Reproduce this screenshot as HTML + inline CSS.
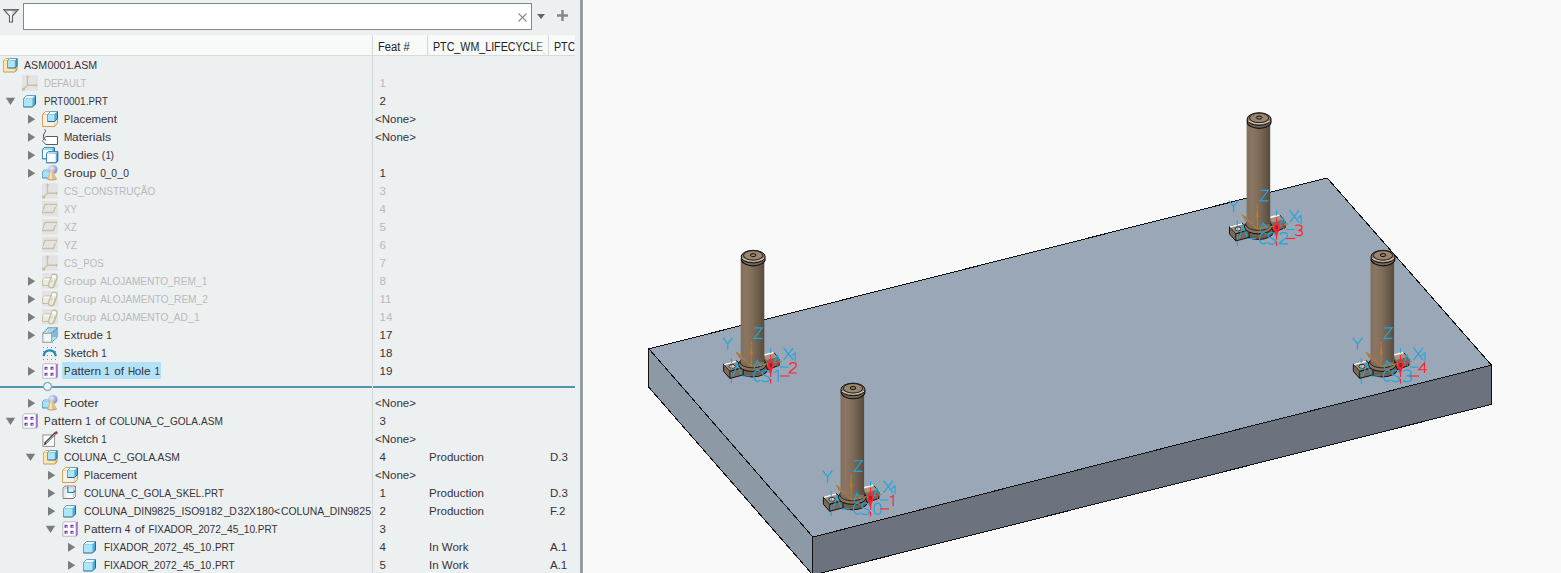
<!DOCTYPE html>
<html><head><meta charset="utf-8"><style>
html,body{margin:0;padding:0;width:1561px;height:573px;overflow:hidden;background:#f9f9f9;font-family:"Liberation Sans",sans-serif;}
#left{position:absolute;left:0;top:0;width:580px;height:573px;background:#ecf0f1;overflow:hidden}
#sep{position:absolute;left:580px;top:0;width:3px;height:573px;background:#949ca0}
#sepw{position:absolute;left:583px;top:0;width:1px;height:573px;background:#ffffff}
#vp{position:absolute;left:584px;top:0;width:977px;height:573px;background:#f9f9f9;overflow:hidden}
.search{position:absolute;left:23px;top:3px;width:507px;height:25px;background:#fff;border:1px solid #7f8a8e}
.hdr{position:absolute;left:0;top:35px;width:575px;height:20px;background:#f8f9f9;border-bottom:1px solid #d6dadc}
.vl{position:absolute;width:1px;background:#d3d7d9}
.ht{position:absolute;top:36.5px;height:20px;line-height:20px;transform-origin:0 0;font-size:12px;color:#222;white-space:pre;overflow:hidden}
.t{position:absolute;height:18px;line-height:18px;font-size:11.5px;color:#373236;white-space:pre;transform-origin:0 0}
.g{color:#b9b9bb}
.rn{display:inline-block;white-space:pre;vertical-align:top}
.ri{display:inline-block;white-space:pre;transform-origin:0 0}
.c1,.c2,.c3{transform:none}
.ic{position:absolute;overflow:visible}
.tr{position:absolute;width:0;height:0;border-top:4.6px solid transparent;border-bottom:4.6px solid transparent;border-left:7.4px solid #7c7c7c}
.td{position:absolute;width:0;height:0;border-left:4.7px solid transparent;border-right:4.7px solid transparent;border-top:7.4px solid #7c7c7c}
.hl{position:absolute;height:17px;background:#b3e1f7;margin-top:0px}
.ins{position:absolute;left:0;width:575px;height:2px;background:#5294b2}
.insc{position:absolute;left:42.5px;width:7px;height:7px;border:1.5px solid #5e9cb8;border-radius:50%;background:#eef1f3;box-shadow:0 0 1px #b9d5e2}
#clip{position:absolute;left:0;top:56px;width:371px;height:517px;overflow:hidden}
</style></head><body>
<div id="left">
<svg style="position:absolute;left:3px;top:9px" width="16" height="14" viewBox="0 0 16 14"><defs><linearGradient id="fg" x1="0" x2="1"><stop offset="0" stop-color="#c8c8c8"/><stop offset="0.45" stop-color="#ffffff"/><stop offset="1" stop-color="#8a8a8a"/></linearGradient></defs><path d="M0.6 0.6 L15.4 0.6 L9.5 6.8 L9.5 13 L6.5 13 L6.5 6.8 Z" fill="url(#fg)" stroke="#5e5e5e" stroke-width="1.1"/><path d="M1.5 1.3 L14.5 1.3" stroke="#888" stroke-width="1.2"/></svg>
<div class="search"></div>
<svg style="position:absolute;left:518px;top:12.5px" width="9" height="9" viewBox="0 0 9 9"><path d="M0.5 0.5 L8.5 8.5 M8.5 0.5 L0.5 8.5" stroke="#8c8c8c" stroke-width="1.1"/></svg>
<div style="position:absolute;left:537px;top:14px;width:0;height:0;border-left:4px solid transparent;border-right:4px solid transparent;border-top:5px solid #666"></div>
<svg style="position:absolute;left:556px;top:9px" width="13" height="13" viewBox="0 0 13 13"><path d="M6.5 1 L6.5 12 M1 6.5 L12 6.5" stroke="#858585" stroke-width="2.4"/></svg>
<div class="hdr"></div>
<div class="vl" style="left:372px;top:35px;height:538px"></div>
<div class="vl" style="left:427px;top:35px;height:20px"></div>
<div class="vl" style="left:548px;top:35px;height:20px"></div>
<div class="ht" style="left:378px;width:49px;transform:scaleX(0.93)">Feat #</div>
<div class="ht" style="left:433px;width:126px;transform:scaleX(0.89)">PTC_WM_LIFECYCLE_STATE</div>
<div class="ht" style="left:554px;width:23px;transform:scaleX(0.89)">PTC_WM_VERSION</div>
<div style="position:absolute;left:535px;top:36px;width:12px;height:19px;background:linear-gradient(to right,rgba(248,249,249,0),#f8f9f9)"></div>
<div id="clip">
<div style="position:absolute;left:0;top:-56px;width:580px;height:573px">
<svg class="ic" style="left:2px;top:57px" width="16" height="16" viewBox="0 0 16 16"><path d="M1.5 3.5 L3.5 1.5 L15.0 1.5 L13.0 3.5 Z" fill="#fff4dc"/><path d="M13.0 3.5 L15.0 1.5 L15.0 13.0 L13.0 15.0 Z" fill="#e9c47c"/><rect x="1.5" y="3.5" width="11.5" height="11.5" fill="#fde6b3"/><path d="M1.5 15.0 L1.5 3.5 L3.5 1.5 L15.0 1.5" fill="none" stroke="#d7aa5c" stroke-width="1.0"/><path d="M15.0 1.5 L15.0 13.0 L13.0 15.0 L1.5 15.0" fill="none" stroke="#c89a4c" stroke-width="1.0"/><path d="M1.5 3.5 L13.0 3.5 L15.0 1.5 M13.0 3.5 L13.0 15.0" fill="none" stroke="#d7aa5c" stroke-width="0.6" opacity="0.7"/><path d="M5.5 3.5 L7.5 1.5 L15.0 1.5 L13.0 3.5 Z" fill="#eefaff"/><path d="M13.0 3.5 L15.0 1.5 L15.0 9.0 L13.0 11.0 Z" fill="#48afdf"/><rect x="5.5" y="3.5" width="7.5" height="7.5" fill="#ade5f9"/><path d="M5.5 11.0 L5.5 3.5 L7.5 1.5 L15.0 1.5" fill="none" stroke="#5aa7c9" stroke-width="1.0"/><path d="M15.0 1.5 L15.0 9.0 L13.0 11.0 L5.5 11.0" fill="none" stroke="#1b6a94" stroke-width="1.0"/><path d="M5.5 3.5 L13.0 3.5 L15.0 1.5 M13.0 3.5 L13.0 11.0" fill="none" stroke="#5aa7c9" stroke-width="0.6" opacity="0.7"/></svg>
<div class="t" style="left:23.6px;top:56px;transform:scaleX(1.065)"><span class="rn" style="width:21.64px"><span class="ri" style="transform:scaleX(0.869)">ASM</span></span><span class="rn" style="width:22.79px"><span class="ri" style="transform:scaleX(0.891)">0001</span></span><span class="rn" style="width:2.97px"><span class="ri" style="transform:scaleX(0.93)">.</span></span><span class="rn" style="width:21.64px"><span class="ri" style="transform:scaleX(0.869)">ASM</span></span></div>
<svg class="ic" style="left:22px;top:75px" width="16" height="16" viewBox="0 0 16 16"><rect x="0" y="0.2" width="16" height="15.4" fill="#e3e3e3"/><path d="M5.5 1 L5.5 10.3 L15 10.3 M5.5 10.3 L1.5 14" fill="none" stroke="#c6c2a5" stroke-width="1.4"/><path d="M3.8 2.2 L5.5 0.2 L7.2 2.2 Z M13.8 8.6 L16 10.3 L13.8 12 Z" fill="#c6c2a5"/><rect x="0" y="12.8" width="3" height="2.8" fill="#c6c2a5"/></svg>
<div class="t g" style="left:43.6px;top:74px;transform:scaleX(0.958)"><span class="rn" style="width:45.50px"><span class="ri" style="transform:scaleX(0.869)">DEFAULT</span></span></div>
<svg class="ic" style="left:5px;top:97px" width="11" height="9"><path d="M0.8 0.8 L10.2 0.8 L5.5 8 Z" fill="#7c7c7c"/></svg>
<svg class="ic" style="left:22px;top:93px" width="16" height="16" viewBox="0 0 16 16"><path d="M1.5 5.5 L4.5 2.5 L13.5 2.5 L10.5 5.5 Z" fill="#eefaff"/><path d="M10.5 5.5 L13.5 2.5 L13.5 11.0 L10.5 14.0 Z" fill="#48afdf"/><rect x="1.5" y="5.5" width="9" height="8.5" fill="#ade5f9"/><path d="M1.5 14.0 L1.5 5.5 L4.5 2.5 L13.5 2.5" fill="none" stroke="#5aa7c9" stroke-width="1.0"/><path d="M13.5 2.5 L13.5 11.0 L10.5 14.0 L1.5 14.0" fill="none" stroke="#1b6a94" stroke-width="1.0"/><path d="M1.5 5.5 L10.5 5.5 L13.5 2.5 M10.5 5.5 L10.5 14.0" fill="none" stroke="#5aa7c9" stroke-width="0.6" opacity="0.7"/></svg>
<div class="t" style="left:43.6px;top:92px;transform:scaleX(0.970)"><span class="rn" style="width:19.97px"><span class="ri" style="transform:scaleX(0.869)">PRT</span></span><span class="rn" style="width:22.79px"><span class="ri" style="transform:scaleX(0.891)">0001</span></span><span class="rn" style="width:2.97px"><span class="ri" style="transform:scaleX(0.93)">.</span></span><span class="rn" style="width:19.97px"><span class="ri" style="transform:scaleX(0.869)">PRT</span></span></div>
<svg class="ic" style="left:28px;top:114px" width="9" height="11"><path d="M0 0.7 L7.2 5.25 L0 9.8 Z" fill="#7c7c7c"/></svg>
<svg class="ic" style="left:42px;top:111px" width="16" height="16" viewBox="0 0 16 16"><path d="M0.5 3.5 L3.5 0.5 L15.5 0.5 L12.5 3.5 Z" fill="#fbf6ec"/><path d="M12.5 3.5 L15.5 0.5 L15.5 12.5 L12.5 15.5 Z" fill="#efe5d2"/><rect x="0.5" y="3.5" width="12" height="12" fill="#f7f1e5"/><path d="M0.5 15.5 L0.5 3.5 L3.5 0.5 L15.5 0.5" fill="none" stroke="#d3a75a" stroke-width="1.0"/><path d="M15.5 0.5 L15.5 12.5 L12.5 15.5 L0.5 15.5" fill="none" stroke="#c99c4e" stroke-width="1.0"/><path d="M0.5 3.5 L12.5 3.5 L15.5 0.5 M12.5 3.5 L12.5 15.5" fill="none" stroke="#d3a75a" stroke-width="0.6" opacity="0.7"/><path d="M5.5 3.5 L8.5 0.5 L15.5 0.5 L12.5 3.5 Z" fill="#eefaff"/><path d="M12.5 3.5 L15.5 0.5 L15.5 7.5 L12.5 10.5 Z" fill="#48afdf"/><rect x="5.5" y="3.5" width="7" height="7" fill="#ade5f9"/><path d="M5.5 10.5 L5.5 3.5 L8.5 0.5 L15.5 0.5" fill="none" stroke="#5aa7c9" stroke-width="1.0"/><path d="M15.5 0.5 L15.5 7.5 L12.5 10.5 L5.5 10.5" fill="none" stroke="#1b6a94" stroke-width="1.0"/><path d="M5.5 3.5 L12.5 3.5 L15.5 0.5 M12.5 3.5 L12.5 10.5" fill="none" stroke="#5aa7c9" stroke-width="0.6" opacity="0.7"/></svg>
<div class="t" style="left:63.6px;top:110px;transform:scaleX(0.946)"><span class="rn" style="width:6.66px"><span class="ri" style="transform:scaleX(0.869)">P</span></span><span class="rn" style="width:48.82px"><span class="ri" style="transform:scaleX(1.047)">lacement</span></span></div>
<svg class="ic" style="left:28px;top:132px" width="9" height="11"><path d="M0 0.7 L7.2 5.25 L0 9.8 Z" fill="#7c7c7c"/></svg>
<svg class="ic" style="left:42px;top:129px" width="16" height="16" viewBox="0 0 16 16"><path d="M0.5 11.8 L3.8 7.5 L15.5 7.5 L15.5 15.5 L3.8 15.5 Z" fill="#fff" stroke="#5a5a5a" stroke-width="1"/><path d="M2.6 0.3 C4.8 2 2.3 3.5 1.6 6 C1 8.5 2.5 11 4.2 11.2" fill="none" stroke="#3e3e3e" stroke-width="1"/></svg>
<div class="t" style="left:63.6px;top:128px;transform:scaleX(1.002)"><span class="rn" style="width:8.31px"><span class="ri" style="transform:scaleX(0.869)">M</span></span><span class="rn" style="width:38.77px"><span class="ri" style="transform:scaleX(1.047)">aterials</span></span></div>
<svg class="ic" style="left:28px;top:150px" width="9" height="11"><path d="M0 0.7 L7.2 5.25 L0 9.8 Z" fill="#7c7c7c"/></svg>
<svg class="ic" style="left:42px;top:147px" width="16" height="16" viewBox="0 0 16 16"><path d="M0.5 2.3 L2.3 0.5 L12.3 0.5 L10.5 2.3 Z" fill="#a9e5fa"/><path d="M10.5 2.3 L12.3 0.5 L12.3 10.0 L10.5 11.8 Z" fill="#6bb5d6"/><rect x="0.5" y="2.3" width="10" height="9.5" fill="#ffffff"/><path d="M0.5 11.8 L0.5 2.3 L2.3 0.5 L12.3 0.5" fill="none" stroke="#3a90bd" stroke-width="1.0"/><path d="M12.3 0.5 L12.3 10.0 L10.5 11.8 L0.5 11.8" fill="none" stroke="#1a628a" stroke-width="1.0"/><path d="M0.5 2.3 L10.5 2.3 L12.3 0.5 M10.5 2.3 L10.5 11.8" fill="none" stroke="#3a90bd" stroke-width="0.6" opacity="0.7"/><path d="M4.5 6.3 L6.3 4.5 L15.8 4.5 L14.0 6.3 Z" fill="#a9e5fa"/><path d="M14.0 6.3 L15.8 4.5 L15.8 14.0 L14.0 15.8 Z" fill="#6bb5d6"/><rect x="4.5" y="6.3" width="9.5" height="9.5" fill="#ffffff"/><path d="M4.5 15.8 L4.5 6.3 L6.3 4.5 L15.8 4.5" fill="none" stroke="#3a90bd" stroke-width="1.0"/><path d="M15.8 4.5 L15.8 14.0 L14.0 15.8 L4.5 15.8" fill="none" stroke="#1a628a" stroke-width="1.0"/><path d="M4.5 6.3 L14.0 6.3 L15.8 4.5 M14.0 6.3 L14.0 15.8" fill="none" stroke="#3a90bd" stroke-width="0.6" opacity="0.7"/></svg>
<div class="t" style="left:63.6px;top:146px;transform:scaleX(0.968)"><span class="rn" style="width:6.66px"><span class="ri" style="transform:scaleX(0.869)">B</span></span><span class="rn" style="width:28.77px"><span class="ri" style="transform:scaleX(1.047)">odies</span></span><span class="rn" style="width:3.83px"><span class="ri" style="transform:scaleX(1.2)"> </span></span><span class="rn" style="width:3.55px"><span class="ri" style="transform:scaleX(0.93)">(</span></span><span class="rn" style="width:5.70px"><span class="ri" style="transform:scaleX(0.891)">1</span></span><span class="rn" style="width:3.55px"><span class="ri" style="transform:scaleX(0.93)">)</span></span></div>
<svg class="ic" style="left:28px;top:168px" width="9" height="11"><path d="M0 0.7 L7.2 5.25 L0 9.8 Z" fill="#7c7c7c"/></svg>
<svg class="ic" style="left:42px;top:165px" width="16" height="16" viewBox="0 0 16 16"><path d="M0.5 6.5 L2.0 5 L9.5 5 L8.0 6.5 Z" fill="#f0fbff"/><path d="M8.0 6.5 L9.5 5 L9.5 11.5 L8.0 13.0 Z" fill="#6fc0e0"/><rect x="0.5" y="6.5" width="7.5" height="6.5" fill="#a6e3f8"/><path d="M0.5 13.0 L0.5 6.5 L2.0 5 L9.5 5" fill="none" stroke="#6aaccb" stroke-width="1.0"/><path d="M9.5 5 L9.5 11.5 L8.0 13.0 L0.5 13.0" fill="none" stroke="#3f8db5" stroke-width="1.0"/><path d="M0.5 6.5 L8.0 6.5 L9.5 5 M8.0 6.5 L8.0 13.0" fill="none" stroke="#6aaccb" stroke-width="0.6" opacity="0.7"/><defs><radialGradient id="sph" cx="0.35" cy="0.35" r="0.7"><stop offset="0" stop-color="#f2f3fc"/><stop offset="0.5" stop-color="#b5bbe9"/><stop offset="1" stop-color="#7f88cc"/></radialGradient></defs><circle cx="10.9" cy="4.6" r="4.6" fill="url(#sph)"/><path d="M9.6 3.2 C8 7 6 11 4.9 13.6 C6 15.3 13.5 15.3 14.9 13.6 C13.5 11 11.2 7 9.6 3.2 Z" fill="#dfc089"/><path d="M9.6 3.2 C8.5 7 7.5 11 7.5 14.5 C8.5 15 9.5 15 10 15 C9.8 11 9.7 7 9.6 3.2 Z" fill="#f6e6c2"/><path d="M5 13.8 C7 15.4 13 15.4 14.9 13.8" fill="none" stroke="#b38d4d" stroke-width="0.8"/></svg>
<div class="t" style="left:63.6px;top:164px;transform:scaleX(1.004)"><span class="rn" style="width:7.77px"><span class="ri" style="transform:scaleX(0.869)">G</span></span><span class="rn" style="width:24.08px"><span class="ri" style="transform:scaleX(1.047)">roup</span></span><span class="rn" style="width:3.83px"><span class="ri" style="transform:scaleX(1.2)"> </span></span><span class="rn" style="width:5.70px"><span class="ri" style="transform:scaleX(0.891)">0</span></span><span class="rn" style="width:5.95px"><span class="ri" style="transform:scaleX(0.93)">_</span></span><span class="rn" style="width:5.70px"><span class="ri" style="transform:scaleX(0.891)">0</span></span><span class="rn" style="width:5.95px"><span class="ri" style="transform:scaleX(0.93)">_</span></span><span class="rn" style="width:5.70px"><span class="ri" style="transform:scaleX(0.891)">0</span></span></div>
<svg class="ic" style="left:42px;top:183px" width="16" height="16" viewBox="0 0 16 16"><rect x="0" y="0.2" width="16" height="15.4" fill="#e3e3e3"/><path d="M5.5 1 L5.5 10.3 L15 10.3 M5.5 10.3 L1.5 14" fill="none" stroke="#c6c2a5" stroke-width="1.4"/><path d="M3.8 2.2 L5.5 0.2 L7.2 2.2 Z M13.8 8.6 L16 10.3 L13.8 12 Z" fill="#c6c2a5"/><rect x="0" y="12.8" width="3" height="2.8" fill="#c6c2a5"/></svg>
<div class="t g" style="left:63.6px;top:182px;transform:scaleX(1.002)"><span class="rn" style="width:13.87px"><span class="ri" style="transform:scaleX(0.869)">CS</span></span><span class="rn" style="width:5.95px"><span class="ri" style="transform:scaleX(0.93)">_</span></span><span class="rn" style="width:71.01px"><span class="ri" style="transform:scaleX(0.869)">CONSTRUÇÃO</span></span></div>
<svg class="ic" style="left:42px;top:201px" width="16" height="16" viewBox="0 0 16 16"><rect x="0" y="0" width="16" height="15.5" fill="#e3e3e3"/><path d="M2.8 3.3 L14.5 3.3 L11.3 11.5 L0.6 11.5 Z" fill="none" stroke="#c6c2a5" stroke-width="1.3"/><path d="M13.7 4.5 L13 6 M1.5 10.5 L2 9.2" stroke="#fff" stroke-width="0.8"/></svg>
<div class="t g" style="left:63.6px;top:200px;transform:scaleX(0.961)"><span class="rn" style="width:12.49px"><span class="ri" style="transform:scaleX(0.869)">XY</span></span></div>
<svg class="ic" style="left:42px;top:219px" width="16" height="16" viewBox="0 0 16 16"><rect x="0" y="0" width="16" height="15.5" fill="#e3e3e3"/><path d="M2.8 3.3 L14.5 3.3 L11.3 11.5 L0.6 11.5 Z" fill="none" stroke="#c6c2a5" stroke-width="1.3"/><path d="M13.7 4.5 L13 6 M1.5 10.5 L2 9.2" stroke="#fff" stroke-width="0.8"/></svg>
<div class="t g" style="left:63.6px;top:218px;transform:scaleX(1.001)"><span class="rn" style="width:12.49px"><span class="ri" style="transform:scaleX(0.869)">XZ</span></span></div>
<svg class="ic" style="left:42px;top:237px" width="16" height="16" viewBox="0 0 16 16"><rect x="0" y="0" width="16" height="15.5" fill="#e3e3e3"/><path d="M2.8 3.3 L14.5 3.3 L11.3 11.5 L0.6 11.5 Z" fill="none" stroke="#c6c2a5" stroke-width="1.3"/><path d="M13.7 4.5 L13 6 M1.5 10.5 L2 9.2" stroke="#fff" stroke-width="0.8"/></svg>
<div class="t g" style="left:63.6px;top:236px;transform:scaleX(1.029)"><span class="rn" style="width:11.66px"><span class="ri" style="transform:scaleX(0.869)">YZ</span></span></div>
<svg class="ic" style="left:42px;top:255px" width="16" height="16" viewBox="0 0 16 16"><rect x="0" y="0.2" width="16" height="15.4" fill="#e3e3e3"/><path d="M5.5 1 L5.5 10.3 L15 10.3 M5.5 10.3 L1.5 14" fill="none" stroke="#c6c2a5" stroke-width="1.4"/><path d="M3.8 2.2 L5.5 0.2 L7.2 2.2 Z M13.8 8.6 L16 10.3 L13.8 12 Z" fill="#c6c2a5"/><rect x="0" y="12.8" width="3" height="2.8" fill="#c6c2a5"/></svg>
<div class="t g" style="left:63.6px;top:254px;transform:scaleX(0.963)"><span class="rn" style="width:13.87px"><span class="ri" style="transform:scaleX(0.869)">CS</span></span><span class="rn" style="width:5.95px"><span class="ri" style="transform:scaleX(0.93)">_</span></span><span class="rn" style="width:21.09px"><span class="ri" style="transform:scaleX(0.869)">POS</span></span></div>
<svg class="ic" style="left:28px;top:276px" width="9" height="11"><path d="M0 0.7 L7.2 5.25 L0 9.8 Z" fill="#7c7c7c"/></svg>
<svg class="ic" style="left:42px;top:273px" width="16" height="16" viewBox="0 0 16 16"><rect x="0" y="0" width="16" height="15.5" fill="#e3e3e3"/><path d="M0.5 7 L2.5 5 L9 5 L9 12.5 L0.5 12.5 Z" fill="#ecebe3" stroke="#c3bfa5" stroke-width="1"/><path d="M1.5 6.3 L8.5 6.3" stroke="#fff" stroke-width="1.2"/><path d="M12.3 4 L9.3 12" stroke="#c3bfa5" stroke-width="7" stroke-linecap="round"/><path d="M12.3 4.2 L9.3 12" stroke="#ecebe3" stroke-width="4.2" stroke-linecap="round"/><path d="M13.5 7 C13 10 12.5 12 11 14.5" stroke="#c3bfa5" stroke-width="1.6" fill="none"/><ellipse cx="12" cy="3.5" rx="2.3" ry="1.5" fill="#fafaf6"/><path d="M9 9.5 L10.5 7.5" stroke="#c3bfa5" stroke-width="1"/></svg>
<div class="t g" style="left:63.6px;top:272px;transform:scaleX(1.005)"><span class="rn" style="width:7.77px"><span class="ri" style="transform:scaleX(0.869)">G</span></span><span class="rn" style="width:24.08px"><span class="ri" style="transform:scaleX(1.047)">roup</span></span><span class="rn" style="width:3.83px"><span class="ri" style="transform:scaleX(1.2)"> </span></span><span class="rn" style="width:67.70px"><span class="ri" style="transform:scaleX(0.869)">ALOJAMENTO</span></span><span class="rn" style="width:5.95px"><span class="ri" style="transform:scaleX(0.93)">_</span></span><span class="rn" style="width:22.19px"><span class="ri" style="transform:scaleX(0.869)">REM</span></span><span class="rn" style="width:5.95px"><span class="ri" style="transform:scaleX(0.93)">_</span></span><span class="rn" style="width:5.70px"><span class="ri" style="transform:scaleX(0.891)">1</span></span></div>
<svg class="ic" style="left:28px;top:294px" width="9" height="11"><path d="M0 0.7 L7.2 5.25 L0 9.8 Z" fill="#7c7c7c"/></svg>
<svg class="ic" style="left:42px;top:291px" width="16" height="16" viewBox="0 0 16 16"><rect x="0" y="0" width="16" height="15.5" fill="#e3e3e3"/><path d="M0.5 7 L2.5 5 L9 5 L9 12.5 L0.5 12.5 Z" fill="#ecebe3" stroke="#c3bfa5" stroke-width="1"/><path d="M1.5 6.3 L8.5 6.3" stroke="#fff" stroke-width="1.2"/><path d="M12.3 4 L9.3 12" stroke="#c3bfa5" stroke-width="7" stroke-linecap="round"/><path d="M12.3 4.2 L9.3 12" stroke="#ecebe3" stroke-width="4.2" stroke-linecap="round"/><path d="M13.5 7 C13 10 12.5 12 11 14.5" stroke="#c3bfa5" stroke-width="1.6" fill="none"/><ellipse cx="12" cy="3.5" rx="2.3" ry="1.5" fill="#fafaf6"/><path d="M9 9.5 L10.5 7.5" stroke="#c3bfa5" stroke-width="1"/></svg>
<div class="t g" style="left:63.6px;top:290px;transform:scaleX(1.010)"><span class="rn" style="width:7.77px"><span class="ri" style="transform:scaleX(0.869)">G</span></span><span class="rn" style="width:24.08px"><span class="ri" style="transform:scaleX(1.047)">roup</span></span><span class="rn" style="width:3.83px"><span class="ri" style="transform:scaleX(1.2)"> </span></span><span class="rn" style="width:67.70px"><span class="ri" style="transform:scaleX(0.869)">ALOJAMENTO</span></span><span class="rn" style="width:5.95px"><span class="ri" style="transform:scaleX(0.93)">_</span></span><span class="rn" style="width:22.19px"><span class="ri" style="transform:scaleX(0.869)">REM</span></span><span class="rn" style="width:5.95px"><span class="ri" style="transform:scaleX(0.93)">_</span></span><span class="rn" style="width:5.70px"><span class="ri" style="transform:scaleX(0.891)">2</span></span></div>
<svg class="ic" style="left:28px;top:312px" width="9" height="11"><path d="M0 0.7 L7.2 5.25 L0 9.8 Z" fill="#7c7c7c"/></svg>
<svg class="ic" style="left:42px;top:309px" width="16" height="16" viewBox="0 0 16 16"><rect x="0" y="0" width="16" height="15.5" fill="#e3e3e3"/><path d="M0.5 7 L2.5 5 L9 5 L9 12.5 L0.5 12.5 Z" fill="#ecebe3" stroke="#c3bfa5" stroke-width="1"/><path d="M1.5 6.3 L8.5 6.3" stroke="#fff" stroke-width="1.2"/><path d="M12.3 4 L9.3 12" stroke="#c3bfa5" stroke-width="7" stroke-linecap="round"/><path d="M12.3 4.2 L9.3 12" stroke="#ecebe3" stroke-width="4.2" stroke-linecap="round"/><path d="M13.5 7 C13 10 12.5 12 11 14.5" stroke="#c3bfa5" stroke-width="1.6" fill="none"/><ellipse cx="12" cy="3.5" rx="2.3" ry="1.5" fill="#fafaf6"/><path d="M9 9.5 L10.5 7.5" stroke="#c3bfa5" stroke-width="1"/></svg>
<div class="t g" style="left:63.6px;top:308px;transform:scaleX(1.008)"><span class="rn" style="width:7.77px"><span class="ri" style="transform:scaleX(0.869)">G</span></span><span class="rn" style="width:24.08px"><span class="ri" style="transform:scaleX(1.047)">roup</span></span><span class="rn" style="width:3.83px"><span class="ri" style="transform:scaleX(1.2)"> </span></span><span class="rn" style="width:67.70px"><span class="ri" style="transform:scaleX(0.869)">ALOJAMENTO</span></span><span class="rn" style="width:5.95px"><span class="ri" style="transform:scaleX(0.93)">_</span></span><span class="rn" style="width:13.87px"><span class="ri" style="transform:scaleX(0.869)">AD</span></span><span class="rn" style="width:5.95px"><span class="ri" style="transform:scaleX(0.93)">_</span></span><span class="rn" style="width:5.70px"><span class="ri" style="transform:scaleX(0.891)">1</span></span></div>
<svg class="ic" style="left:28px;top:330px" width="9" height="11"><path d="M0 0.7 L7.2 5.25 L0 9.8 Z" fill="#7c7c7c"/></svg>
<svg class="ic" style="left:42px;top:327px" width="16" height="16" viewBox="0 0 16 16"><path d="M0.7 6.2 L5.9 0.7 L15.5 0.7 L15.5 9.8 L9.6 15.5 L9.6 6.2 Z" fill="#c4e8f7"/><path d="M5.9 0.7 L15.5 0.7 L9.6 6.2 L5.9 6.2 Z" fill="#a4d5ec"/><path d="M15.5 0.7 L15.5 9.8 L9.6 10.5 L9.6 6.2 Z" fill="#7ebedb"/><path d="M5.9 0.7 L15.5 0.7 L15.5 9.8" fill="none" stroke="#a9a9a9" stroke-width="1.2"/><path d="M1.2 6 L5.9 0.9 M9.6 6.2 L15.3 0.9 M9.6 15.3 L15.3 9.9" fill="none" stroke="#2a8fc0" stroke-width="1.1" stroke-dasharray="1.2 0.8"/><rect x="0.8" y="6.3" width="8.8" height="9" fill="#f4f4f4" stroke="#a7a4a4" stroke-width="1.2"/></svg>
<div class="t" style="left:63.6px;top:326px;transform:scaleX(0.963)"><span class="rn" style="width:6.66px"><span class="ri" style="transform:scaleX(0.869)">E</span></span><span class="rn" style="width:33.44px"><span class="ri" style="transform:scaleX(1.047)">xtrude</span></span><span class="rn" style="width:3.83px"><span class="ri" style="transform:scaleX(1.2)"> </span></span><span class="rn" style="width:5.70px"><span class="ri" style="transform:scaleX(0.891)">1</span></span></div>
<svg class="ic" style="left:42px;top:345px" width="16" height="16" viewBox="0 0 16 16"><rect x="1" y="2" width="1" height="1" fill="#8a8a8a"/><rect x="1" y="6" width="1" height="1" fill="#8a8a8a"/><rect x="1" y="10" width="1" height="1" fill="#8a8a8a"/><rect x="1" y="14" width="1" height="1" fill="#8a8a8a"/><rect x="5" y="2" width="1" height="1" fill="#8a8a8a"/><rect x="5" y="6" width="1" height="1" fill="#8a8a8a"/><rect x="5" y="10" width="1" height="1" fill="#8a8a8a"/><rect x="5" y="14" width="1" height="1" fill="#8a8a8a"/><rect x="9" y="2" width="1" height="1" fill="#8a8a8a"/><rect x="9" y="6" width="1" height="1" fill="#8a8a8a"/><rect x="9" y="10" width="1" height="1" fill="#8a8a8a"/><rect x="9" y="14" width="1" height="1" fill="#8a8a8a"/><rect x="13" y="2" width="1" height="1" fill="#8a8a8a"/><rect x="13" y="6" width="1" height="1" fill="#8a8a8a"/><rect x="13" y="10" width="1" height="1" fill="#8a8a8a"/><rect x="13" y="14" width="1" height="1" fill="#8a8a8a"/><path d="M1.6 11.2 C2.5 3.8 12.5 3.3 13.8 11.2" fill="none" stroke="#1e8ab8" stroke-width="2.2"/></svg>
<div class="t" style="left:63.6px;top:344px;transform:scaleX(0.957)"><span class="rn" style="width:6.66px"><span class="ri" style="transform:scaleX(0.869)">S</span></span><span class="rn" style="width:28.77px"><span class="ri" style="transform:scaleX(1.047)">ketch</span></span><span class="rn" style="width:3.83px"><span class="ri" style="transform:scaleX(1.2)"> </span></span><span class="rn" style="width:5.70px"><span class="ri" style="transform:scaleX(0.891)">1</span></span></div>
<svg class="ic" style="left:28px;top:366px" width="9" height="11"><path d="M0 0.7 L7.2 5.25 L0 9.8 Z" fill="#7c7c7c"/></svg>
<svg class="ic" style="left:42px;top:363px" width="16" height="16" viewBox="0 0 16 16"><path d="M0.8 2 L2 0.8 L14 0.8 L14 15.2 L0.8 15.2 Z" fill="#fff" stroke="#b8b8b8" stroke-width="1"/><path d="M14 1.5 L15.8 0.2 L15.8 14 L14 15.5 Z" fill="#9c77c6"/><rect x="2.5" y="3.8" width="3" height="3" fill="#7238ad"/><rect x="3.7" y="5.0" width="1.8" height="1.8" fill="#c2a6df"/><rect x="2.5" y="9.8" width="3" height="3" fill="#7238ad"/><rect x="3.7" y="11.0" width="1.8" height="1.8" fill="#c2a6df"/><rect x="8.5" y="3.8" width="3" height="3" fill="#7238ad"/><rect x="9.7" y="5.0" width="1.8" height="1.8" fill="#c2a6df"/><rect x="8.5" y="9.8" width="3" height="3" fill="#7238ad"/><rect x="9.7" y="11.0" width="1.8" height="1.8" fill="#c2a6df"/></svg>
<div class="hl" style="left:62px;top:362px;width:99px"></div>
<div class="t" style="left:63.6px;top:362px;transform:scaleX(0.983)"><span class="rn" style="width:6.66px"><span class="ri" style="transform:scaleX(0.869)">P</span></span><span class="rn" style="width:30.76px"><span class="ri" style="transform:scaleX(1.047)">attern</span></span><span class="rn" style="width:3.83px"><span class="ri" style="transform:scaleX(1.2)"> </span></span><span class="rn" style="width:5.70px"><span class="ri" style="transform:scaleX(0.891)">1</span></span><span class="rn" style="width:3.83px"><span class="ri" style="transform:scaleX(1.2)"> </span></span><span class="rn" style="width:10.03px"><span class="ri" style="transform:scaleX(1.047)">of</span></span><span class="rn" style="width:3.83px"><span class="ri" style="transform:scaleX(1.2)"> </span></span><span class="rn" style="width:7.21px"><span class="ri" style="transform:scaleX(0.869)">H</span></span><span class="rn" style="width:16.05px"><span class="ri" style="transform:scaleX(1.047)">ole</span></span><span class="rn" style="width:3.83px"><span class="ri" style="transform:scaleX(1.2)"> </span></span><span class="rn" style="width:5.70px"><span class="ri" style="transform:scaleX(0.891)">1</span></span></div>
<svg class="ic" style="left:28px;top:398px" width="9" height="11"><path d="M0 0.7 L7.2 5.25 L0 9.8 Z" fill="#7c7c7c"/></svg>
<svg class="ic" style="left:42px;top:395px" width="16" height="16" viewBox="0 0 16 16"><path d="M0.5 6.5 L2.0 5 L9.5 5 L8.0 6.5 Z" fill="#f0fbff"/><path d="M8.0 6.5 L9.5 5 L9.5 11.5 L8.0 13.0 Z" fill="#6fc0e0"/><rect x="0.5" y="6.5" width="7.5" height="6.5" fill="#a6e3f8"/><path d="M0.5 13.0 L0.5 6.5 L2.0 5 L9.5 5" fill="none" stroke="#6aaccb" stroke-width="1.0"/><path d="M9.5 5 L9.5 11.5 L8.0 13.0 L0.5 13.0" fill="none" stroke="#3f8db5" stroke-width="1.0"/><path d="M0.5 6.5 L8.0 6.5 L9.5 5 M8.0 6.5 L8.0 13.0" fill="none" stroke="#6aaccb" stroke-width="0.6" opacity="0.7"/><defs><radialGradient id="sph" cx="0.35" cy="0.35" r="0.7"><stop offset="0" stop-color="#f2f3fc"/><stop offset="0.5" stop-color="#b5bbe9"/><stop offset="1" stop-color="#7f88cc"/></radialGradient></defs><circle cx="10.9" cy="4.6" r="4.6" fill="url(#sph)"/><path d="M9.6 3.2 C8 7 6 11 4.9 13.6 C6 15.3 13.5 15.3 14.9 13.6 C13.5 11 11.2 7 9.6 3.2 Z" fill="#dfc089"/><path d="M9.6 3.2 C8.5 7 7.5 11 7.5 14.5 C8.5 15 9.5 15 10 15 C9.8 11 9.7 7 9.6 3.2 Z" fill="#f6e6c2"/><path d="M5 13.8 C7 15.4 13 15.4 14.9 13.8" fill="none" stroke="#b38d4d" stroke-width="0.8"/></svg>
<div class="t" style="left:63.6px;top:394px;transform:scaleX(1.035)"><span class="rn" style="width:6.10px"><span class="ri" style="transform:scaleX(0.869)">F</span></span><span class="rn" style="width:27.42px"><span class="ri" style="transform:scaleX(1.047)">ooter</span></span></div>
<svg class="ic" style="left:5px;top:417px" width="11" height="9"><path d="M0.8 0.8 L10.2 0.8 L5.5 8 Z" fill="#7c7c7c"/></svg>
<svg class="ic" style="left:22px;top:413px" width="16" height="16" viewBox="0 0 16 16"><path d="M0.8 2 L2 0.8 L14 0.8 L14 15.2 L0.8 15.2 Z" fill="#fff" stroke="#b8b8b8" stroke-width="1"/><path d="M14 1.5 L15.8 0.2 L15.8 14 L14 15.5 Z" fill="#9c77c6"/><rect x="2.5" y="3.8" width="3" height="3" fill="#7238ad"/><rect x="3.7" y="5.0" width="1.8" height="1.8" fill="#c2a6df"/><rect x="2.5" y="9.8" width="3" height="3" fill="#7238ad"/><rect x="3.7" y="11.0" width="1.8" height="1.8" fill="#c2a6df"/><rect x="8.5" y="3.8" width="3" height="3" fill="#7238ad"/><rect x="9.7" y="5.0" width="1.8" height="1.8" fill="#c2a6df"/><rect x="8.5" y="9.8" width="3" height="3" fill="#7238ad"/><rect x="9.7" y="11.0" width="1.8" height="1.8" fill="#c2a6df"/></svg>
<div class="t" style="left:43.6px;top:412px;transform:scaleX(1.007)"><span class="rn" style="width:6.66px"><span class="ri" style="transform:scaleX(0.869)">P</span></span><span class="rn" style="width:30.76px"><span class="ri" style="transform:scaleX(1.047)">attern</span></span><span class="rn" style="width:3.83px"><span class="ri" style="transform:scaleX(1.2)"> </span></span><span class="rn" style="width:5.70px"><span class="ri" style="transform:scaleX(0.891)">1</span></span><span class="rn" style="width:3.83px"><span class="ri" style="transform:scaleX(1.2)"> </span></span><span class="rn" style="width:10.03px"><span class="ri" style="transform:scaleX(1.047)">of</span></span><span class="rn" style="width:3.83px"><span class="ri" style="transform:scaleX(1.2)"> </span></span><span class="rn" style="width:41.61px"><span class="ri" style="transform:scaleX(0.869)">COLUNA</span></span><span class="rn" style="width:5.95px"><span class="ri" style="transform:scaleX(0.93)">_</span></span><span class="rn" style="width:7.21px"><span class="ri" style="transform:scaleX(0.869)">C</span></span><span class="rn" style="width:5.95px"><span class="ri" style="transform:scaleX(0.93)">_</span></span><span class="rn" style="width:27.76px"><span class="ri" style="transform:scaleX(0.869)">GOLA</span></span><span class="rn" style="width:2.97px"><span class="ri" style="transform:scaleX(0.93)">.</span></span><span class="rn" style="width:21.64px"><span class="ri" style="transform:scaleX(0.869)">ASM</span></span></div>
<svg class="ic" style="left:42px;top:431px" width="16" height="16" viewBox="0 0 16 16"><rect x="0.9" y="4" width="11.6" height="11.4" fill="#fff" stroke="#9b9b9b" stroke-width="1.1"/><path d="M3 12.5 L13.5 2" stroke="#3a3a3a" stroke-width="2.4"/><path d="M3.6 12.2 L13.6 2.4" stroke="#e4d2ad" stroke-width="0.9"/><path d="M12.3 1.6 L14.3 0 L16 1.8 L14.4 3.6 Z" fill="#b03337"/><path d="M1.8 14.2 L2.9 11.6 L4.4 13.1 Z" fill="#1a1a1a"/></svg>
<div class="t" style="left:63.6px;top:430px;transform:scaleX(0.957)"><span class="rn" style="width:6.66px"><span class="ri" style="transform:scaleX(0.869)">S</span></span><span class="rn" style="width:28.77px"><span class="ri" style="transform:scaleX(1.047)">ketch</span></span><span class="rn" style="width:3.83px"><span class="ri" style="transform:scaleX(1.2)"> </span></span><span class="rn" style="width:5.70px"><span class="ri" style="transform:scaleX(0.891)">1</span></span></div>
<svg class="ic" style="left:25px;top:453px" width="11" height="9"><path d="M0.8 0.8 L10.2 0.8 L5.5 8 Z" fill="#7c7c7c"/></svg>
<svg class="ic" style="left:42px;top:449px" width="16" height="16" viewBox="0 0 16 16"><path d="M1.5 3.5 L3.5 1.5 L15.0 1.5 L13.0 3.5 Z" fill="#fff4dc"/><path d="M13.0 3.5 L15.0 1.5 L15.0 13.0 L13.0 15.0 Z" fill="#e9c47c"/><rect x="1.5" y="3.5" width="11.5" height="11.5" fill="#fde6b3"/><path d="M1.5 15.0 L1.5 3.5 L3.5 1.5 L15.0 1.5" fill="none" stroke="#d7aa5c" stroke-width="1.0"/><path d="M15.0 1.5 L15.0 13.0 L13.0 15.0 L1.5 15.0" fill="none" stroke="#c89a4c" stroke-width="1.0"/><path d="M1.5 3.5 L13.0 3.5 L15.0 1.5 M13.0 3.5 L13.0 15.0" fill="none" stroke="#d7aa5c" stroke-width="0.6" opacity="0.7"/><path d="M5.5 3.5 L7.5 1.5 L15.0 1.5 L13.0 3.5 Z" fill="#eefaff"/><path d="M13.0 3.5 L15.0 1.5 L15.0 9.0 L13.0 11.0 Z" fill="#48afdf"/><rect x="5.5" y="3.5" width="7.5" height="7.5" fill="#ade5f9"/><path d="M5.5 11.0 L5.5 3.5 L7.5 1.5 L15.0 1.5" fill="none" stroke="#5aa7c9" stroke-width="1.0"/><path d="M15.0 1.5 L15.0 9.0 L13.0 11.0 L5.5 11.0" fill="none" stroke="#1b6a94" stroke-width="1.0"/><path d="M5.5 3.5 L13.0 3.5 L15.0 1.5 M13.0 3.5 L13.0 11.0" fill="none" stroke="#5aa7c9" stroke-width="0.6" opacity="0.7"/></svg>
<div class="t" style="left:63.6px;top:448px;transform:scaleX(1.028)"><span class="rn" style="width:41.61px"><span class="ri" style="transform:scaleX(0.869)">COLUNA</span></span><span class="rn" style="width:5.95px"><span class="ri" style="transform:scaleX(0.93)">_</span></span><span class="rn" style="width:7.21px"><span class="ri" style="transform:scaleX(0.869)">C</span></span><span class="rn" style="width:5.95px"><span class="ri" style="transform:scaleX(0.93)">_</span></span><span class="rn" style="width:27.76px"><span class="ri" style="transform:scaleX(0.869)">GOLA</span></span><span class="rn" style="width:2.97px"><span class="ri" style="transform:scaleX(0.93)">.</span></span><span class="rn" style="width:21.64px"><span class="ri" style="transform:scaleX(0.869)">ASM</span></span></div>
<svg class="ic" style="left:48px;top:470px" width="9" height="11"><path d="M0 0.7 L7.2 5.25 L0 9.8 Z" fill="#7c7c7c"/></svg>
<svg class="ic" style="left:62px;top:467px" width="16" height="16" viewBox="0 0 16 16"><path d="M0.5 3.5 L3.5 0.5 L15.5 0.5 L12.5 3.5 Z" fill="#fbf6ec"/><path d="M12.5 3.5 L15.5 0.5 L15.5 12.5 L12.5 15.5 Z" fill="#efe5d2"/><rect x="0.5" y="3.5" width="12" height="12" fill="#f7f1e5"/><path d="M0.5 15.5 L0.5 3.5 L3.5 0.5 L15.5 0.5" fill="none" stroke="#d3a75a" stroke-width="1.0"/><path d="M15.5 0.5 L15.5 12.5 L12.5 15.5 L0.5 15.5" fill="none" stroke="#c99c4e" stroke-width="1.0"/><path d="M0.5 3.5 L12.5 3.5 L15.5 0.5 M12.5 3.5 L12.5 15.5" fill="none" stroke="#d3a75a" stroke-width="0.6" opacity="0.7"/><path d="M5.5 3.5 L8.5 0.5 L15.5 0.5 L12.5 3.5 Z" fill="#eefaff"/><path d="M12.5 3.5 L15.5 0.5 L15.5 7.5 L12.5 10.5 Z" fill="#48afdf"/><rect x="5.5" y="3.5" width="7" height="7" fill="#ade5f9"/><path d="M5.5 10.5 L5.5 3.5 L8.5 0.5 L15.5 0.5" fill="none" stroke="#5aa7c9" stroke-width="1.0"/><path d="M15.5 0.5 L15.5 7.5 L12.5 10.5 L5.5 10.5" fill="none" stroke="#1b6a94" stroke-width="1.0"/><path d="M5.5 3.5 L12.5 3.5 L15.5 0.5 M12.5 3.5 L12.5 10.5" fill="none" stroke="#5aa7c9" stroke-width="0.6" opacity="0.7"/></svg>
<div class="t" style="left:83.6px;top:466px;transform:scaleX(0.946)"><span class="rn" style="width:6.66px"><span class="ri" style="transform:scaleX(0.869)">P</span></span><span class="rn" style="width:48.82px"><span class="ri" style="transform:scaleX(1.047)">lacement</span></span></div>
<svg class="ic" style="left:48px;top:488px" width="9" height="11"><path d="M0 0.7 L7.2 5.25 L0 9.8 Z" fill="#7c7c7c"/></svg>
<svg class="ic" style="left:62px;top:485px" width="16" height="16" viewBox="0 0 16 16"><path d="M1 3 L3 1 L13.5 1 L11.5 3 Z" fill="#f0f0f0"/><path d="M11.5 3 L13.5 1 L13.5 11.5 L11.5 13.5 Z" fill="#e8e8e8"/><rect x="1" y="3" width="10.5" height="10.5" fill="#f7f7f7"/><path d="M1 13.5 L1 3 L3 1 L13.5 1" fill="none" stroke="#8d8d8d" stroke-width="1.0"/><path d="M13.5 1 L13.5 11.5 L11.5 13.5 L1 13.5" fill="none" stroke="#7a7a7a" stroke-width="1.0"/><path d="M1 3 L11.5 3 L13.5 1 M11.5 3 L11.5 13.5" fill="none" stroke="#8d8d8d" stroke-width="0.6" opacity="0.7"/><path d="M3 12.8 L3 3 L13 3 L13 11" fill="none" stroke="#cfcfcf" stroke-width="0.8"/><path d="M5.8 1.5 L5.8 7.3 L11 7.3" fill="none" stroke="#1e8ab8" stroke-width="1.2"/><path d="M11 7.3 C12.5 7 13.2 6.2 13.5 5" fill="none" stroke="#1e8ab8" stroke-width="1.2"/><rect x="7" y="3.5" width="3.5" height="3" fill="#d6eef8"/></svg>
<div class="t" style="left:83.6px;top:484px;transform:scaleX(0.980)"><span class="rn" style="width:41.61px"><span class="ri" style="transform:scaleX(0.869)">COLUNA</span></span><span class="rn" style="width:5.95px"><span class="ri" style="transform:scaleX(0.93)">_</span></span><span class="rn" style="width:7.21px"><span class="ri" style="transform:scaleX(0.869)">C</span></span><span class="rn" style="width:5.95px"><span class="ri" style="transform:scaleX(0.93)">_</span></span><span class="rn" style="width:27.76px"><span class="ri" style="transform:scaleX(0.869)">GOLA</span></span><span class="rn" style="width:5.95px"><span class="ri" style="transform:scaleX(0.93)">_</span></span><span class="rn" style="width:25.54px"><span class="ri" style="transform:scaleX(0.869)">SKEL</span></span><span class="rn" style="width:2.97px"><span class="ri" style="transform:scaleX(0.93)">.</span></span><span class="rn" style="width:19.97px"><span class="ri" style="transform:scaleX(0.869)">PRT</span></span></div>
<svg class="ic" style="left:48px;top:506px" width="9" height="11"><path d="M0 0.7 L7.2 5.25 L0 9.8 Z" fill="#7c7c7c"/></svg>
<svg class="ic" style="left:62px;top:503px" width="16" height="16" viewBox="0 0 16 16"><path d="M1.5 5.5 L4.5 2.5 L13.5 2.5 L10.5 5.5 Z" fill="#eefaff"/><path d="M10.5 5.5 L13.5 2.5 L13.5 11.0 L10.5 14.0 Z" fill="#48afdf"/><rect x="1.5" y="5.5" width="9" height="8.5" fill="#ade5f9"/><path d="M1.5 14.0 L1.5 5.5 L4.5 2.5 L13.5 2.5" fill="none" stroke="#5aa7c9" stroke-width="1.0"/><path d="M13.5 2.5 L13.5 11.0 L10.5 14.0 L1.5 14.0" fill="none" stroke="#1b6a94" stroke-width="1.0"/><path d="M1.5 5.5 L10.5 5.5 L13.5 2.5 M10.5 5.5 L10.5 14.0" fill="none" stroke="#5aa7c9" stroke-width="0.6" opacity="0.7"/></svg>
<div class="t" style="left:83.6px;top:502px;transform:scaleX(1.037)"><span class="rn" style="width:41.61px"><span class="ri" style="transform:scaleX(0.869)">COLUNA</span></span><span class="rn" style="width:5.95px"><span class="ri" style="transform:scaleX(0.93)">_</span></span><span class="rn" style="width:17.19px"><span class="ri" style="transform:scaleX(0.869)">DIN</span></span><span class="rn" style="width:23.35px"><span class="ri" style="transform:scaleX(0.891)">9825</span></span><span class="rn" style="width:5.95px"><span class="ri" style="transform:scaleX(0.93)">_</span></span><span class="rn" style="width:17.20px"><span class="ri" style="transform:scaleX(0.869)">ISO</span></span><span class="rn" style="width:23.35px"><span class="ri" style="transform:scaleX(0.891)">9182</span></span><span class="rn" style="width:5.95px"><span class="ri" style="transform:scaleX(0.93)">_</span></span><span class="rn" style="width:7.21px"><span class="ri" style="transform:scaleX(0.869)">D</span></span><span class="rn" style="width:11.67px"><span class="ri" style="transform:scaleX(0.891)">32</span></span><span class="rn" style="width:6.66px"><span class="ri" style="transform:scaleX(0.869)">X</span></span><span class="rn" style="width:17.37px"><span class="ri" style="transform:scaleX(0.891)">180</span></span><span class="rn" style="width:6.24px"><span class="ri" style="transform:scaleX(0.93)">&lt;</span></span><span class="rn" style="width:41.61px"><span class="ri" style="transform:scaleX(0.869)">COLUNA</span></span><span class="rn" style="width:5.95px"><span class="ri" style="transform:scaleX(0.93)">_</span></span><span class="rn" style="width:17.19px"><span class="ri" style="transform:scaleX(0.869)">DIN</span></span><span class="rn" style="width:23.35px"><span class="ri" style="transform:scaleX(0.891)">9825</span></span></div>
<svg class="ic" style="left:45px;top:525px" width="11" height="9"><path d="M0.8 0.8 L10.2 0.8 L5.5 8 Z" fill="#7c7c7c"/></svg>
<svg class="ic" style="left:62px;top:521px" width="16" height="16" viewBox="0 0 16 16"><path d="M0.8 2 L2 0.8 L14 0.8 L14 15.2 L0.8 15.2 Z" fill="#fff" stroke="#b8b8b8" stroke-width="1"/><path d="M14 1.5 L15.8 0.2 L15.8 14 L14 15.5 Z" fill="#9c77c6"/><rect x="2.5" y="3.8" width="3" height="3" fill="#7238ad"/><rect x="3.7" y="5.0" width="1.8" height="1.8" fill="#c2a6df"/><rect x="2.5" y="9.8" width="3" height="3" fill="#7238ad"/><rect x="3.7" y="11.0" width="1.8" height="1.8" fill="#c2a6df"/><rect x="8.5" y="3.8" width="3" height="3" fill="#7238ad"/><rect x="9.7" y="5.0" width="1.8" height="1.8" fill="#c2a6df"/><rect x="8.5" y="9.8" width="3" height="3" fill="#7238ad"/><rect x="9.7" y="11.0" width="1.8" height="1.8" fill="#c2a6df"/></svg>
<div class="t" style="left:83.6px;top:520px;transform:scaleX(0.993)"><span class="rn" style="width:6.66px"><span class="ri" style="transform:scaleX(0.869)">P</span></span><span class="rn" style="width:30.76px"><span class="ri" style="transform:scaleX(1.047)">attern</span></span><span class="rn" style="width:3.83px"><span class="ri" style="transform:scaleX(1.2)"> </span></span><span class="rn" style="width:5.70px"><span class="ri" style="transform:scaleX(0.891)">4</span></span><span class="rn" style="width:3.83px"><span class="ri" style="transform:scaleX(1.2)"> </span></span><span class="rn" style="width:10.03px"><span class="ri" style="transform:scaleX(1.047)">of</span></span><span class="rn" style="width:3.83px"><span class="ri" style="transform:scaleX(1.2)"> </span></span><span class="rn" style="width:44.39px"><span class="ri" style="transform:scaleX(0.869)">FIXADOR</span></span><span class="rn" style="width:5.95px"><span class="ri" style="transform:scaleX(0.93)">_</span></span><span class="rn" style="width:22.79px"><span class="ri" style="transform:scaleX(0.891)">2072</span></span><span class="rn" style="width:5.95px"><span class="ri" style="transform:scaleX(0.93)">_</span></span><span class="rn" style="width:11.39px"><span class="ri" style="transform:scaleX(0.891)">45</span></span><span class="rn" style="width:5.95px"><span class="ri" style="transform:scaleX(0.93)">_</span></span><span class="rn" style="width:11.39px"><span class="ri" style="transform:scaleX(0.891)">10</span></span><span class="rn" style="width:2.97px"><span class="ri" style="transform:scaleX(0.93)">.</span></span><span class="rn" style="width:19.97px"><span class="ri" style="transform:scaleX(0.869)">PRT</span></span></div>
<svg class="ic" style="left:68px;top:542px" width="9" height="11"><path d="M0 0.7 L7.2 5.25 L0 9.8 Z" fill="#7c7c7c"/></svg>
<svg class="ic" style="left:82px;top:539px" width="16" height="16" viewBox="0 0 16 16"><path d="M1.5 5.5 L4.5 2.5 L13.5 2.5 L10.5 5.5 Z" fill="#eefaff"/><path d="M10.5 5.5 L13.5 2.5 L13.5 11.0 L10.5 14.0 Z" fill="#48afdf"/><rect x="1.5" y="5.5" width="9" height="8.5" fill="#ade5f9"/><path d="M1.5 14.0 L1.5 5.5 L4.5 2.5 L13.5 2.5" fill="none" stroke="#5aa7c9" stroke-width="1.0"/><path d="M13.5 2.5 L13.5 11.0 L10.5 14.0 L1.5 14.0" fill="none" stroke="#1b6a94" stroke-width="1.0"/><path d="M1.5 5.5 L10.5 5.5 L13.5 2.5 M10.5 5.5 L10.5 14.0" fill="none" stroke="#5aa7c9" stroke-width="0.6" opacity="0.7"/></svg>
<div class="t" style="left:103.6px;top:538px;transform:scaleX(0.999)"><span class="rn" style="width:44.39px"><span class="ri" style="transform:scaleX(0.869)">FIXADOR</span></span><span class="rn" style="width:5.95px"><span class="ri" style="transform:scaleX(0.93)">_</span></span><span class="rn" style="width:22.79px"><span class="ri" style="transform:scaleX(0.891)">2072</span></span><span class="rn" style="width:5.95px"><span class="ri" style="transform:scaleX(0.93)">_</span></span><span class="rn" style="width:11.39px"><span class="ri" style="transform:scaleX(0.891)">45</span></span><span class="rn" style="width:5.95px"><span class="ri" style="transform:scaleX(0.93)">_</span></span><span class="rn" style="width:11.39px"><span class="ri" style="transform:scaleX(0.891)">10</span></span><span class="rn" style="width:2.97px"><span class="ri" style="transform:scaleX(0.93)">.</span></span><span class="rn" style="width:19.97px"><span class="ri" style="transform:scaleX(0.869)">PRT</span></span></div>
<svg class="ic" style="left:68px;top:560px" width="9" height="11"><path d="M0 0.7 L7.2 5.25 L0 9.8 Z" fill="#7c7c7c"/></svg>
<svg class="ic" style="left:82px;top:557px" width="16" height="16" viewBox="0 0 16 16"><path d="M1.5 5.5 L4.5 2.5 L13.5 2.5 L10.5 5.5 Z" fill="#eefaff"/><path d="M10.5 5.5 L13.5 2.5 L13.5 11.0 L10.5 14.0 Z" fill="#48afdf"/><rect x="1.5" y="5.5" width="9" height="8.5" fill="#ade5f9"/><path d="M1.5 14.0 L1.5 5.5 L4.5 2.5 L13.5 2.5" fill="none" stroke="#5aa7c9" stroke-width="1.0"/><path d="M13.5 2.5 L13.5 11.0 L10.5 14.0 L1.5 14.0" fill="none" stroke="#1b6a94" stroke-width="1.0"/><path d="M1.5 5.5 L10.5 5.5 L13.5 2.5 M10.5 5.5 L10.5 14.0" fill="none" stroke="#5aa7c9" stroke-width="0.6" opacity="0.7"/></svg>
<div class="t" style="left:103.6px;top:556px;transform:scaleX(0.999)"><span class="rn" style="width:44.39px"><span class="ri" style="transform:scaleX(0.869)">FIXADOR</span></span><span class="rn" style="width:5.95px"><span class="ri" style="transform:scaleX(0.93)">_</span></span><span class="rn" style="width:22.79px"><span class="ri" style="transform:scaleX(0.891)">2072</span></span><span class="rn" style="width:5.95px"><span class="ri" style="transform:scaleX(0.93)">_</span></span><span class="rn" style="width:11.39px"><span class="ri" style="transform:scaleX(0.891)">45</span></span><span class="rn" style="width:5.95px"><span class="ri" style="transform:scaleX(0.93)">_</span></span><span class="rn" style="width:11.39px"><span class="ri" style="transform:scaleX(0.891)">10</span></span><span class="rn" style="width:2.97px"><span class="ri" style="transform:scaleX(0.93)">.</span></span><span class="rn" style="width:19.97px"><span class="ri" style="transform:scaleX(0.869)">PRT</span></span></div>
</div>
</div>
<div style="position:absolute;left:0px;top:56px;width:576px;height:517px;overflow:hidden">
<div style="position:absolute;left:0px;top:-56px;width:580px;height:573px" id="cols"><div class="t g c1" style="left:379.5px;top:74px">1</div>
<div class="t c1" style="left:379.5px;top:92px">2</div>
<div class="t c1" style="left:375px;top:110px">&lt;None&gt;</div>
<div class="t c1" style="left:375px;top:128px">&lt;None&gt;</div>
<div class="t c1" style="left:379.5px;top:164px">1</div>
<div class="t g c1" style="left:379.5px;top:182px">3</div>
<div class="t g c1" style="left:379.5px;top:200px">4</div>
<div class="t g c1" style="left:379.5px;top:218px">5</div>
<div class="t g c1" style="left:379.5px;top:236px">6</div>
<div class="t g c1" style="left:379.5px;top:254px">7</div>
<div class="t g c1" style="left:379.5px;top:272px">8</div>
<div class="t g c1" style="left:379.5px;top:290px">11</div>
<div class="t g c1" style="left:379.5px;top:308px">14</div>
<div class="t c1" style="left:379.5px;top:326px">17</div>
<div class="t c1" style="left:379.5px;top:344px">18</div>
<div class="t c1" style="left:379.5px;top:362px">19</div>
<div class="ins" style="top:386px"></div><div class="vl" style="left:372px;top:386px;height:2px;background:#e6eaeb"></div><div class="insc" style="top:381.8px"></div>
<div class="t c1" style="left:375px;top:394px">&lt;None&gt;</div>
<div class="t c1" style="left:379.5px;top:412px">3</div>
<div class="t c1" style="left:375px;top:430px">&lt;None&gt;</div>
<div class="t c1" style="left:379.5px;top:448px">4</div>
<div class="t c2" style="left:429px;top:448px">Production</div>
<div class="t c3" style="left:550px;top:448px">D.3</div>
<div class="t c1" style="left:375px;top:466px">&lt;None&gt;</div>
<div class="t c1" style="left:379.5px;top:484px">1</div>
<div class="t c2" style="left:429px;top:484px">Production</div>
<div class="t c3" style="left:550px;top:484px">D.3</div>
<div class="t c1" style="left:379.5px;top:502px">2</div>
<div class="t c2" style="left:429px;top:502px">Production</div>
<div class="t c3" style="left:550px;top:502px">F.2</div>
<div class="t c1" style="left:379.5px;top:520px">3</div>
<div class="t c1" style="left:379.5px;top:538px">4</div>
<div class="t c2" style="left:429px;top:538px">In Work</div>
<div class="t c3" style="left:550px;top:538px">A.1</div>
<div class="t c1" style="left:379.5px;top:556px">5</div>
<div class="t c2" style="left:429px;top:556px">In Work</div>
<div class="t c3" style="left:550px;top:556px">A.1</div></div>
</div>
</div>
<div id="sep"></div><div id="sepw"></div>
<div id="vp"><svg style="position:absolute;left:-584px;top:0" width="1561" height="573" viewBox="0 0 1561 573">
<defs>
<linearGradient id="cyl" x1="0" x2="1" y1="0" y2="0">
<stop offset="0" stop-color="#82705c"/><stop offset="0.22" stop-color="#8b7663"/><stop offset="0.5" stop-color="#7f6d5a"/><stop offset="0.8" stop-color="#685949"/><stop offset="1" stop-color="#594b3c"/>
</linearGradient>
</defs>
<polygon points="648.9,348.8 812.9,537.0 812.9,575.0 648.9,387.4" fill="#8e99a6" stroke="#111" stroke-width="1" stroke-linejoin="miter" shape-rendering="crispEdges"/>
<polygon points="812.9,537.0 1491.5,365.2 1491.5,404.4 812.9,575.0" fill="#6c737e" stroke="#111" stroke-width="1" stroke-linejoin="miter" shape-rendering="crispEdges"/>
<polygon points="648.9,348.8 1327.1,177.9 1491.5,365.2 812.9,537.0" fill="#99a7b6" stroke="#111" stroke-width="1" stroke-linejoin="miter" shape-rendering="crispEdges"/>
<path d="M763.2 355.4 L773.8 352.4 L779.2 359.4 L779.2 365.4 L768.2 369.4 L763.2 367.4 Z" fill="#7b6a57" stroke="#121212" stroke-width="1"/>
<path d="M763.7 355.4 L773.8 352.9 L777.2 356.9 L766.2 359.9 Z" fill="#a89583"/>
<path d="M764.2 354.9 L773.7 352.4" stroke="#fff" stroke-width="1.6"/>
<ellipse cx="752.5" cy="369.4" rx="15" ry="7.5" fill="#6f5f4e" stroke="#121212" stroke-width="1"/>
<path d="M723.6 364.4 L736.7 360.9 L743.2 367.4 L743.2 374.9 L729.9 378.4 L723.6 371.4 Z" fill="#7b6a57" stroke="#121212" stroke-width="1"/>
<path d="M723.6 364.4 L736.7 360.9 L742.9 367.2 L729.9 371.3 Z" fill="#9d8a77" stroke="#121212" stroke-width="0.8"/>
<path d="M724.2 364.4 L736.2 361.2" stroke="#fff" stroke-width="1.6"/>
<ellipse cx="732.2" cy="366.4" rx="3" ry="2" fill="#cfd3d8" stroke="#121212" stroke-width="0.8"/>
<path d="M729.9000000000001 371.4 L729.9000000000001 378.4 M729.9000000000001 371.4 L743.2 367.4" stroke="#121212" stroke-width="0.9" fill="none"/>
<ellipse cx="752.5" cy="364.4" rx="14" ry="7" fill="#86735f" stroke="#121212" stroke-width="1"/>
<ellipse cx="752.5" cy="361.9" rx="12.5" ry="6" fill="#7f6d5a" stroke="#121212" stroke-width="0.8"/>
<rect x="740.7" y="260.4" width="23.6" height="101.5" fill="url(#cyl)"/>
<ellipse cx="753.2" cy="258.9" rx="12" ry="7" fill="#7a6855" stroke="#121212" stroke-width="1.1"/>
<ellipse cx="753.2" cy="256.6" rx="12" ry="6.3" fill="#8d7a66" stroke="#121212" stroke-width="1"/>
<path d="M742.2 258.4 Q753.2 263.9 764.2 258.4" fill="none" stroke="#e9e4dc" stroke-width="0.9"/>
<ellipse cx="753.2" cy="255.4" rx="9.6" ry="4.8" fill="#9a846e" stroke="#121212" stroke-width="0.9"/>
<ellipse cx="753.2" cy="255.1" rx="2.8" ry="1.5" fill="none" stroke="#121212" stroke-width="1"/>
<path d="M751.3000000000001 366.4 L751.3000000000001 341.4 M751.3000000000001 366.4 L736.2 352.0 M751.3000000000001 366.4 L782.2 361.4" stroke="#b27a3a" stroke-width="1.1" fill="none"/>
<path d="M749.6 354.4 L751.3000000000001 346.4 L753.0 354.4 Z M739.2 358.4 L736.2 352.0 L742.2 355.4 Z" fill="#b27a3a"/>
<path transform="translate(753.9 327.4) scale(0.93 0.96)" d="M0.5 0.5 L9 0.5 L0.3 11.5 L9.3 11.5" stroke="#1ea6e0" stroke-width="1.15" fill="none" vector-effect="non-scaling-stroke"/>
<path transform="translate(723.0 337.8) scale(1.0 1.0)" d="M0 0 L4.75 6 L9.5 0 M4.75 6 L4.75 12" stroke="#1ea6e0" stroke-width="1.15" fill="none" vector-effect="non-scaling-stroke"/>
<path transform="translate(783.7 347.8) scale(1.0 1.0)" d="M0 0 L9.5 12 M9.5 0 L0 12" stroke="#1ea6e0" stroke-width="1.15" fill="none" vector-effect="non-scaling-stroke"/>
<path transform="translate(789.0 362.4) scale(0.87 0.92)" d="M0.8 2.8 C1.2 -0.6 8.4 -0.6 8.4 3 C8.4 6 1 8.5 0.3 11.5 L8.8 11.5" stroke="#ff2030" stroke-width="1.15" fill="none" vector-effect="non-scaling-stroke"/>
<path transform="translate(753.5 369.9) scale(0.85 1.0)" d="M8 2 C6.5 -0.3 0.5 -0.5 0.3 6 C0.5 12.3 6.5 12.3 8 10" stroke="#1ea6e0" stroke-width="1.15" fill="none" vector-effect="non-scaling-stroke"/>
<path transform="translate(761.2 369.9) scale(0.95 1.0)" d="M8.5 1.8 C6.5 -0.5 0.8 -0.3 0.8 3 C0.8 6.5 9 5.5 9 9 C9 12.3 2.5 12.5 0.3 10" stroke="#1ea6e0" stroke-width="1.15" fill="none" vector-effect="non-scaling-stroke"/>
<path transform="translate(773.2 369.9) scale(1.0 1.0)" d="M1.5 2.5 L5 0.3 L5 11.5" stroke="#1ea6e0" stroke-width="1.15" fill="none" vector-effect="non-scaling-stroke"/>
<path d="M791.7 355.9 L795.2 353.0 L795.2 361.4" stroke="#1ea6e0" stroke-width="1.1" fill="none"/>
<path d="M780.2 367.1 L788.5 367.1" stroke="#1ea6e0" stroke-width="1.1"/>
<path d="M780.2 376.0 L789.2 376.0" stroke="#ff2030" stroke-width="1.1"/>
<path d="M731.4000000000001 358.0 L731.4000000000001 383.4 M770.7 348.3 L770.7 355.4" stroke="#1ea6e0" stroke-width="1.1" stroke-dasharray="5 2"/>
<path d="M770.7 354.9 L770.7 383.4" stroke="#ff2030" stroke-width="1.1" stroke-dasharray="6 2"/>
<path d="M768.7 363.4 C768.7 360.9 772.7 360.9 772.7 363.4 L772.7 367.4 C772.7 369.4 768.7 369.4 768.7 367.4 Z M773.7 363.4 C773.7 360.9 777.7 360.9 777.7 363.4 L777.7 366.4" fill="none" stroke="#ff2030" stroke-width="1.3"/><path d="M768.7 368.4 L772.7 368.4 L771.2 373.4 L769.7 373.4 Z" fill="#ff2030"/><rect x="769.5" y="362.9" width="2.4" height="4" fill="#7a2a30"/>
<path d="M741.8000000000001 376.0 L750.2 376.0 M733.2 376.4 L737.2 363.4 L741.2 374.4 M774.2 363.4 L777.2 355.4 L780.2 363.4 M761.2 366.4 L757.2 360.4 L754.2 368.4" stroke="#1ea6e0" stroke-width="1.1" fill="none"/>
<path d="M1269.1 217.9 L1279.7 214.9 L1285.1 221.9 L1285.1 227.9 L1274.1 231.9 L1269.1 229.9 Z" fill="#7b6a57" stroke="#121212" stroke-width="1"/>
<path d="M1269.6 217.9 L1279.7 215.4 L1283.1 219.4 L1272.1 222.4 Z" fill="#a89583"/>
<path d="M1270.1 217.4 L1279.6 214.9" stroke="#fff" stroke-width="1.6"/>
<ellipse cx="1258.3999999999999" cy="231.9" rx="15" ry="7.5" fill="#6f5f4e" stroke="#121212" stroke-width="1"/>
<path d="M1229.5 226.9 L1242.6 223.4 L1249.1 229.9 L1249.1 237.4 L1235.8 240.9 L1229.5 233.9 Z" fill="#7b6a57" stroke="#121212" stroke-width="1"/>
<path d="M1229.5 226.9 L1242.6 223.4 L1248.8 229.7 L1235.8 233.8 Z" fill="#9d8a77" stroke="#121212" stroke-width="0.8"/>
<path d="M1230.1 226.9 L1242.1 223.7" stroke="#fff" stroke-width="1.6"/>
<ellipse cx="1238.1" cy="228.9" rx="3" ry="2" fill="#cfd3d8" stroke="#121212" stroke-width="0.8"/>
<path d="M1235.8 233.9 L1235.8 240.9 M1235.8 233.9 L1249.1 229.9" stroke="#121212" stroke-width="0.9" fill="none"/>
<ellipse cx="1258.3999999999999" cy="226.9" rx="14" ry="7" fill="#86735f" stroke="#121212" stroke-width="1"/>
<ellipse cx="1258.3999999999999" cy="224.4" rx="12.5" ry="6" fill="#7f6d5a" stroke="#121212" stroke-width="0.8"/>
<rect x="1246.6" y="122.9" width="23.6" height="101.5" fill="url(#cyl)"/>
<ellipse cx="1259.1" cy="121.4" rx="12" ry="7" fill="#7a6855" stroke="#121212" stroke-width="1.1"/>
<ellipse cx="1259.1" cy="119.10000000000001" rx="12" ry="6.3" fill="#8d7a66" stroke="#121212" stroke-width="1"/>
<path d="M1248.1 120.9 Q1259.1 126.4 1270.1 120.9" fill="none" stroke="#e9e4dc" stroke-width="0.9"/>
<ellipse cx="1259.1" cy="117.9" rx="9.6" ry="4.8" fill="#9a846e" stroke="#121212" stroke-width="0.9"/>
<ellipse cx="1259.1" cy="117.60000000000001" rx="2.8" ry="1.5" fill="none" stroke="#121212" stroke-width="1"/>
<path d="M1257.1999999999998 228.9 L1257.1999999999998 203.9 M1257.1999999999998 228.9 L1242.1 214.5 M1257.1999999999998 228.9 L1288.1 223.9" stroke="#b27a3a" stroke-width="1.1" fill="none"/>
<path d="M1255.5 216.9 L1257.1999999999998 208.9 L1258.8999999999999 216.9 Z M1245.1 220.9 L1242.1 214.5 L1248.1 217.9 Z" fill="#b27a3a"/>
<path transform="translate(1259.8 189.9) scale(0.93 0.96)" d="M0.5 0.5 L9 0.5 L0.3 11.5 L9.3 11.5" stroke="#1ea6e0" stroke-width="1.15" fill="none" vector-effect="non-scaling-stroke"/>
<path transform="translate(1228.9 200.3) scale(1.0 1.0)" d="M0 0 L4.75 6 L9.5 0 M4.75 6 L4.75 12" stroke="#1ea6e0" stroke-width="1.15" fill="none" vector-effect="non-scaling-stroke"/>
<path transform="translate(1289.6 210.3) scale(1.0 1.0)" d="M0 0 L9.5 12 M9.5 0 L0 12" stroke="#1ea6e0" stroke-width="1.15" fill="none" vector-effect="non-scaling-stroke"/>
<path transform="translate(1294.9 224.9) scale(0.87 0.92)" d="M0.6 1.4 C2 -0.6 8.4 -0.4 8.2 3 C8 5.3 5.6 6 3.6 6 C6.2 6 8.6 7 8.6 9 C8.6 12.2 2 12.4 0.2 10.4" stroke="#ff2030" stroke-width="1.15" fill="none" vector-effect="non-scaling-stroke"/>
<path transform="translate(1259.4 232.4) scale(0.85 1.0)" d="M8 2 C6.5 -0.3 0.5 -0.5 0.3 6 C0.5 12.3 6.5 12.3 8 10" stroke="#1ea6e0" stroke-width="1.15" fill="none" vector-effect="non-scaling-stroke"/>
<path transform="translate(1267.1 232.4) scale(0.95 1.0)" d="M8.5 1.8 C6.5 -0.5 0.8 -0.3 0.8 3 C0.8 6.5 9 5.5 9 9 C9 12.3 2.5 12.5 0.3 10" stroke="#1ea6e0" stroke-width="1.15" fill="none" vector-effect="non-scaling-stroke"/>
<path transform="translate(1279.1 232.4) scale(1.0 1.0)" d="M0.8 2.8 C1.2 -0.6 8.4 -0.6 8.4 3 C8.4 6 1 8.5 0.3 11.5 L8.8 11.5" stroke="#1ea6e0" stroke-width="1.15" fill="none" vector-effect="non-scaling-stroke"/>
<path d="M1297.6 218.4 L1301.1 215.5 L1301.1 223.9" stroke="#1ea6e0" stroke-width="1.1" fill="none"/>
<path d="M1286.1 229.60000000000002 L1294.3999999999999 229.60000000000002" stroke="#1ea6e0" stroke-width="1.1"/>
<path d="M1286.1 238.5 L1295.1 238.5" stroke="#ff2030" stroke-width="1.1"/>
<path d="M1237.3 220.5 L1237.3 245.9 M1276.6 210.8 L1276.6 217.9" stroke="#1ea6e0" stroke-width="1.1" stroke-dasharray="5 2"/>
<path d="M1276.6 217.4 L1276.6 245.9" stroke="#ff2030" stroke-width="1.1" stroke-dasharray="6 2"/>
<path d="M1274.6 225.9 C1274.6 223.4 1278.6 223.4 1278.6 225.9 L1278.6 229.9 C1278.6 231.9 1274.6 231.9 1274.6 229.9 Z M1279.6 225.9 C1279.6 223.4 1283.6 223.4 1283.6 225.9 L1283.6 228.9" fill="none" stroke="#ff2030" stroke-width="1.3"/><path d="M1274.6 230.9 L1278.6 230.9 L1277.1 235.9 L1275.6 235.9 Z" fill="#ff2030"/><rect x="1275.3999999999999" y="225.4" width="2.4" height="4" fill="#7a2a30"/>
<path d="M1247.6999999999998 238.5 L1256.1 238.5 M1239.1 238.9 L1243.1 225.9 L1247.1 236.9 M1280.1 225.9 L1283.1 217.9 L1286.1 225.9 M1267.1 228.9 L1263.1 222.9 L1260.1 230.9" stroke="#1ea6e0" stroke-width="1.1" fill="none"/>
<path d="M1393.0 355.4 L1403.6 352.4 L1409.0 359.4 L1409.0 365.4 L1398.0 369.4 L1393.0 367.4 Z" fill="#7b6a57" stroke="#121212" stroke-width="1"/>
<path d="M1393.5 355.4 L1403.6 352.9 L1407.0 356.9 L1396.0 359.9 Z" fill="#a89583"/>
<path d="M1394.0 354.9 L1403.5 352.4" stroke="#fff" stroke-width="1.6"/>
<ellipse cx="1382.3" cy="369.4" rx="15" ry="7.5" fill="#6f5f4e" stroke="#121212" stroke-width="1"/>
<path d="M1353.4 364.4 L1366.5 360.9 L1373.0 367.4 L1373.0 374.9 L1359.7 378.4 L1353.4 371.4 Z" fill="#7b6a57" stroke="#121212" stroke-width="1"/>
<path d="M1353.4 364.4 L1366.5 360.9 L1372.7 367.2 L1359.7 371.3 Z" fill="#9d8a77" stroke="#121212" stroke-width="0.8"/>
<path d="M1354.0 364.4 L1366.0 361.2" stroke="#fff" stroke-width="1.6"/>
<ellipse cx="1362.0" cy="366.4" rx="3" ry="2" fill="#cfd3d8" stroke="#121212" stroke-width="0.8"/>
<path d="M1359.7 371.4 L1359.7 378.4 M1359.7 371.4 L1373.0 367.4" stroke="#121212" stroke-width="0.9" fill="none"/>
<ellipse cx="1382.3" cy="364.4" rx="14" ry="7" fill="#86735f" stroke="#121212" stroke-width="1"/>
<ellipse cx="1382.3" cy="361.9" rx="12.5" ry="6" fill="#7f6d5a" stroke="#121212" stroke-width="0.8"/>
<rect x="1370.5" y="260.4" width="23.6" height="101.5" fill="url(#cyl)"/>
<ellipse cx="1383.0" cy="258.9" rx="12" ry="7" fill="#7a6855" stroke="#121212" stroke-width="1.1"/>
<ellipse cx="1383.0" cy="256.6" rx="12" ry="6.3" fill="#8d7a66" stroke="#121212" stroke-width="1"/>
<path d="M1372.0 258.4 Q1383.0 263.9 1394.0 258.4" fill="none" stroke="#e9e4dc" stroke-width="0.9"/>
<ellipse cx="1383.0" cy="255.4" rx="9.6" ry="4.8" fill="#9a846e" stroke="#121212" stroke-width="0.9"/>
<ellipse cx="1383.0" cy="255.1" rx="2.8" ry="1.5" fill="none" stroke="#121212" stroke-width="1"/>
<path d="M1381.1 366.4 L1381.1 341.4 M1381.1 366.4 L1366.0 352.0 M1381.1 366.4 L1412.0 361.4" stroke="#b27a3a" stroke-width="1.1" fill="none"/>
<path d="M1379.4 354.4 L1381.1 346.4 L1382.8 354.4 Z M1369.0 358.4 L1366.0 352.0 L1372.0 355.4 Z" fill="#b27a3a"/>
<path transform="translate(1383.7 327.4) scale(0.93 0.96)" d="M0.5 0.5 L9 0.5 L0.3 11.5 L9.3 11.5" stroke="#1ea6e0" stroke-width="1.15" fill="none" vector-effect="non-scaling-stroke"/>
<path transform="translate(1352.8 337.8) scale(1.0 1.0)" d="M0 0 L4.75 6 L9.5 0 M4.75 6 L4.75 12" stroke="#1ea6e0" stroke-width="1.15" fill="none" vector-effect="non-scaling-stroke"/>
<path transform="translate(1413.5 347.8) scale(1.0 1.0)" d="M0 0 L9.5 12 M9.5 0 L0 12" stroke="#1ea6e0" stroke-width="1.15" fill="none" vector-effect="non-scaling-stroke"/>
<path transform="translate(1418.8 362.4) scale(0.87 0.92)" d="M6.5 11.5 L6.5 0.5 L0 8 L9 8" stroke="#ff2030" stroke-width="1.15" fill="none" vector-effect="non-scaling-stroke"/>
<path transform="translate(1383.3 369.9) scale(0.85 1.0)" d="M8 2 C6.5 -0.3 0.5 -0.5 0.3 6 C0.5 12.3 6.5 12.3 8 10" stroke="#1ea6e0" stroke-width="1.15" fill="none" vector-effect="non-scaling-stroke"/>
<path transform="translate(1391.0 369.9) scale(0.95 1.0)" d="M8.5 1.8 C6.5 -0.5 0.8 -0.3 0.8 3 C0.8 6.5 9 5.5 9 9 C9 12.3 2.5 12.5 0.3 10" stroke="#1ea6e0" stroke-width="1.15" fill="none" vector-effect="non-scaling-stroke"/>
<path transform="translate(1403.0 369.9) scale(1.0 1.0)" d="M0.6 1.4 C2 -0.6 8.4 -0.4 8.2 3 C8 5.3 5.6 6 3.6 6 C6.2 6 8.6 7 8.6 9 C8.6 12.2 2 12.4 0.2 10.4" stroke="#1ea6e0" stroke-width="1.15" fill="none" vector-effect="non-scaling-stroke"/>
<path d="M1421.5 355.9 L1425.0 353.0 L1425.0 361.4" stroke="#1ea6e0" stroke-width="1.1" fill="none"/>
<path d="M1410.0 367.1 L1418.3 367.1" stroke="#1ea6e0" stroke-width="1.1"/>
<path d="M1410.0 376.0 L1419.0 376.0" stroke="#ff2030" stroke-width="1.1"/>
<path d="M1361.2 358.0 L1361.2 383.4 M1400.5 348.3 L1400.5 355.4" stroke="#1ea6e0" stroke-width="1.1" stroke-dasharray="5 2"/>
<path d="M1400.5 354.9 L1400.5 383.4" stroke="#ff2030" stroke-width="1.1" stroke-dasharray="6 2"/>
<path d="M1398.5 363.4 C1398.5 360.9 1402.5 360.9 1402.5 363.4 L1402.5 367.4 C1402.5 369.4 1398.5 369.4 1398.5 367.4 Z M1403.5 363.4 C1403.5 360.9 1407.5 360.9 1407.5 363.4 L1407.5 366.4" fill="none" stroke="#ff2030" stroke-width="1.3"/><path d="M1398.5 368.4 L1402.5 368.4 L1401.0 373.4 L1399.5 373.4 Z" fill="#ff2030"/><rect x="1399.3" y="362.9" width="2.4" height="4" fill="#7a2a30"/>
<path d="M1371.6 376.0 L1380.0 376.0 M1363.0 376.4 L1367.0 363.4 L1371.0 374.4 M1404.0 363.4 L1407.0 355.4 L1410.0 363.4 M1391.0 366.4 L1387.0 360.4 L1384.0 368.4" stroke="#1ea6e0" stroke-width="1.1" fill="none"/>
<path d="M863.0 488.3 L873.6 485.3 L879.0 492.3 L879.0 498.3 L868.0 502.3 L863.0 500.3 Z" fill="#7b6a57" stroke="#121212" stroke-width="1"/>
<path d="M863.5 488.3 L873.6 485.8 L877.0 489.8 L866.0 492.8 Z" fill="#a89583"/>
<path d="M864.0 487.8 L873.5 485.3" stroke="#fff" stroke-width="1.6"/>
<ellipse cx="852.3" cy="502.3" rx="15" ry="7.5" fill="#6f5f4e" stroke="#121212" stroke-width="1"/>
<path d="M823.4 497.3 L836.5 493.8 L843.0 500.3 L843.0 507.8 L829.7 511.3 L823.4 504.3 Z" fill="#7b6a57" stroke="#121212" stroke-width="1"/>
<path d="M823.4 497.3 L836.5 493.8 L842.7 500.1 L829.7 504.2 Z" fill="#9d8a77" stroke="#121212" stroke-width="0.8"/>
<path d="M824.0 497.3 L836.0 494.1" stroke="#fff" stroke-width="1.6"/>
<ellipse cx="832.0" cy="499.3" rx="3" ry="2" fill="#cfd3d8" stroke="#121212" stroke-width="0.8"/>
<path d="M829.7 504.3 L829.7 511.3 M829.7 504.3 L843.0 500.3" stroke="#121212" stroke-width="0.9" fill="none"/>
<ellipse cx="852.3" cy="497.3" rx="14" ry="7" fill="#86735f" stroke="#121212" stroke-width="1"/>
<ellipse cx="852.3" cy="494.8" rx="12.5" ry="6" fill="#7f6d5a" stroke="#121212" stroke-width="0.8"/>
<rect x="840.5" y="393.3" width="23.6" height="101.5" fill="url(#cyl)"/>
<ellipse cx="853.0" cy="391.8" rx="12" ry="7" fill="#7a6855" stroke="#121212" stroke-width="1.1"/>
<ellipse cx="853.0" cy="389.5" rx="12" ry="6.3" fill="#8d7a66" stroke="#121212" stroke-width="1"/>
<path d="M842.0 391.3 Q853.0 396.8 864.0 391.3" fill="none" stroke="#e9e4dc" stroke-width="0.9"/>
<ellipse cx="853.0" cy="388.3" rx="9.6" ry="4.8" fill="#9a846e" stroke="#121212" stroke-width="0.9"/>
<ellipse cx="853.0" cy="388.0" rx="2.8" ry="1.5" fill="none" stroke="#121212" stroke-width="1"/>
<path d="M851.1 499.3 L851.1 474.3 M851.1 499.3 L836.0 484.9 M851.1 499.3 L882.0 494.3" stroke="#b27a3a" stroke-width="1.1" fill="none"/>
<path d="M849.4 487.3 L851.1 479.3 L852.8 487.3 Z M839.0 491.3 L836.0 484.9 L842.0 488.3 Z" fill="#b27a3a"/>
<path transform="translate(853.7 460.3) scale(0.93 0.96)" d="M0.5 0.5 L9 0.5 L0.3 11.5 L9.3 11.5" stroke="#1ea6e0" stroke-width="1.15" fill="none" vector-effect="non-scaling-stroke"/>
<path transform="translate(822.8 470.7) scale(1.0 1.0)" d="M0 0 L4.75 6 L9.5 0 M4.75 6 L4.75 12" stroke="#1ea6e0" stroke-width="1.15" fill="none" vector-effect="non-scaling-stroke"/>
<path transform="translate(883.5 480.7) scale(1.0 1.0)" d="M0 0 L9.5 12 M9.5 0 L0 12" stroke="#1ea6e0" stroke-width="1.15" fill="none" vector-effect="non-scaling-stroke"/>
<path transform="translate(888.8 495.3) scale(0.87 0.92)" d="M1.5 2.5 L5 0.3 L5 11.5" stroke="#ff2030" stroke-width="1.15" fill="none" vector-effect="non-scaling-stroke"/>
<path transform="translate(853.3 502.8) scale(0.85 1.0)" d="M8 2 C6.5 -0.3 0.5 -0.5 0.3 6 C0.5 12.3 6.5 12.3 8 10" stroke="#1ea6e0" stroke-width="1.15" fill="none" vector-effect="non-scaling-stroke"/>
<path transform="translate(861.0 502.8) scale(0.95 1.0)" d="M8.5 1.8 C6.5 -0.5 0.8 -0.3 0.8 3 C0.8 6.5 9 5.5 9 9 C9 12.3 2.5 12.5 0.3 10" stroke="#1ea6e0" stroke-width="1.15" fill="none" vector-effect="non-scaling-stroke"/>
<path transform="translate(873.0 502.8) scale(1.0 1.0)" d="M4.6 0.3 C-0.2 0.3 -0.2 11.7 4.6 11.7 C9.4 11.7 9.4 0.3 4.6 0.3 Z" stroke="#1ea6e0" stroke-width="1.15" fill="none" vector-effect="non-scaling-stroke"/>
<path d="M891.5 488.8 L895.0 485.9 L895.0 494.3" stroke="#1ea6e0" stroke-width="1.1" fill="none"/>
<path d="M880.0 500.0 L888.3 500.0" stroke="#1ea6e0" stroke-width="1.1"/>
<path d="M880.0 508.9 L889.0 508.9" stroke="#ff2030" stroke-width="1.1"/>
<path d="M831.2 490.9 L831.2 516.3 M870.5 481.20000000000005 L870.5 488.3" stroke="#1ea6e0" stroke-width="1.1" stroke-dasharray="5 2"/>
<path d="M870.5 487.8 L870.5 516.3" stroke="#ff2030" stroke-width="1.1" stroke-dasharray="6 2"/>
<path d="M868.5 496.3 C868.5 493.8 872.5 493.8 872.5 496.3 L872.5 500.3 C872.5 502.3 868.5 502.3 868.5 500.3 Z M873.5 496.3 C873.5 493.8 877.5 493.8 877.5 496.3 L877.5 499.3" fill="none" stroke="#ff2030" stroke-width="1.3"/><path d="M868.5 501.3 L872.5 501.3 L871.0 506.3 L869.5 506.3 Z" fill="#ff2030"/><rect x="869.3" y="495.8" width="2.4" height="4" fill="#7a2a30"/>
<path d="M841.6 508.9 L850.0 508.9 M833.0 509.3 L837.0 496.3 L841.0 507.3 M874.0 496.3 L877.0 488.3 L880.0 496.3 M861.0 499.3 L857.0 493.3 L854.0 501.3" stroke="#1ea6e0" stroke-width="1.1" fill="none"/>
</svg></div>
</body></html>
